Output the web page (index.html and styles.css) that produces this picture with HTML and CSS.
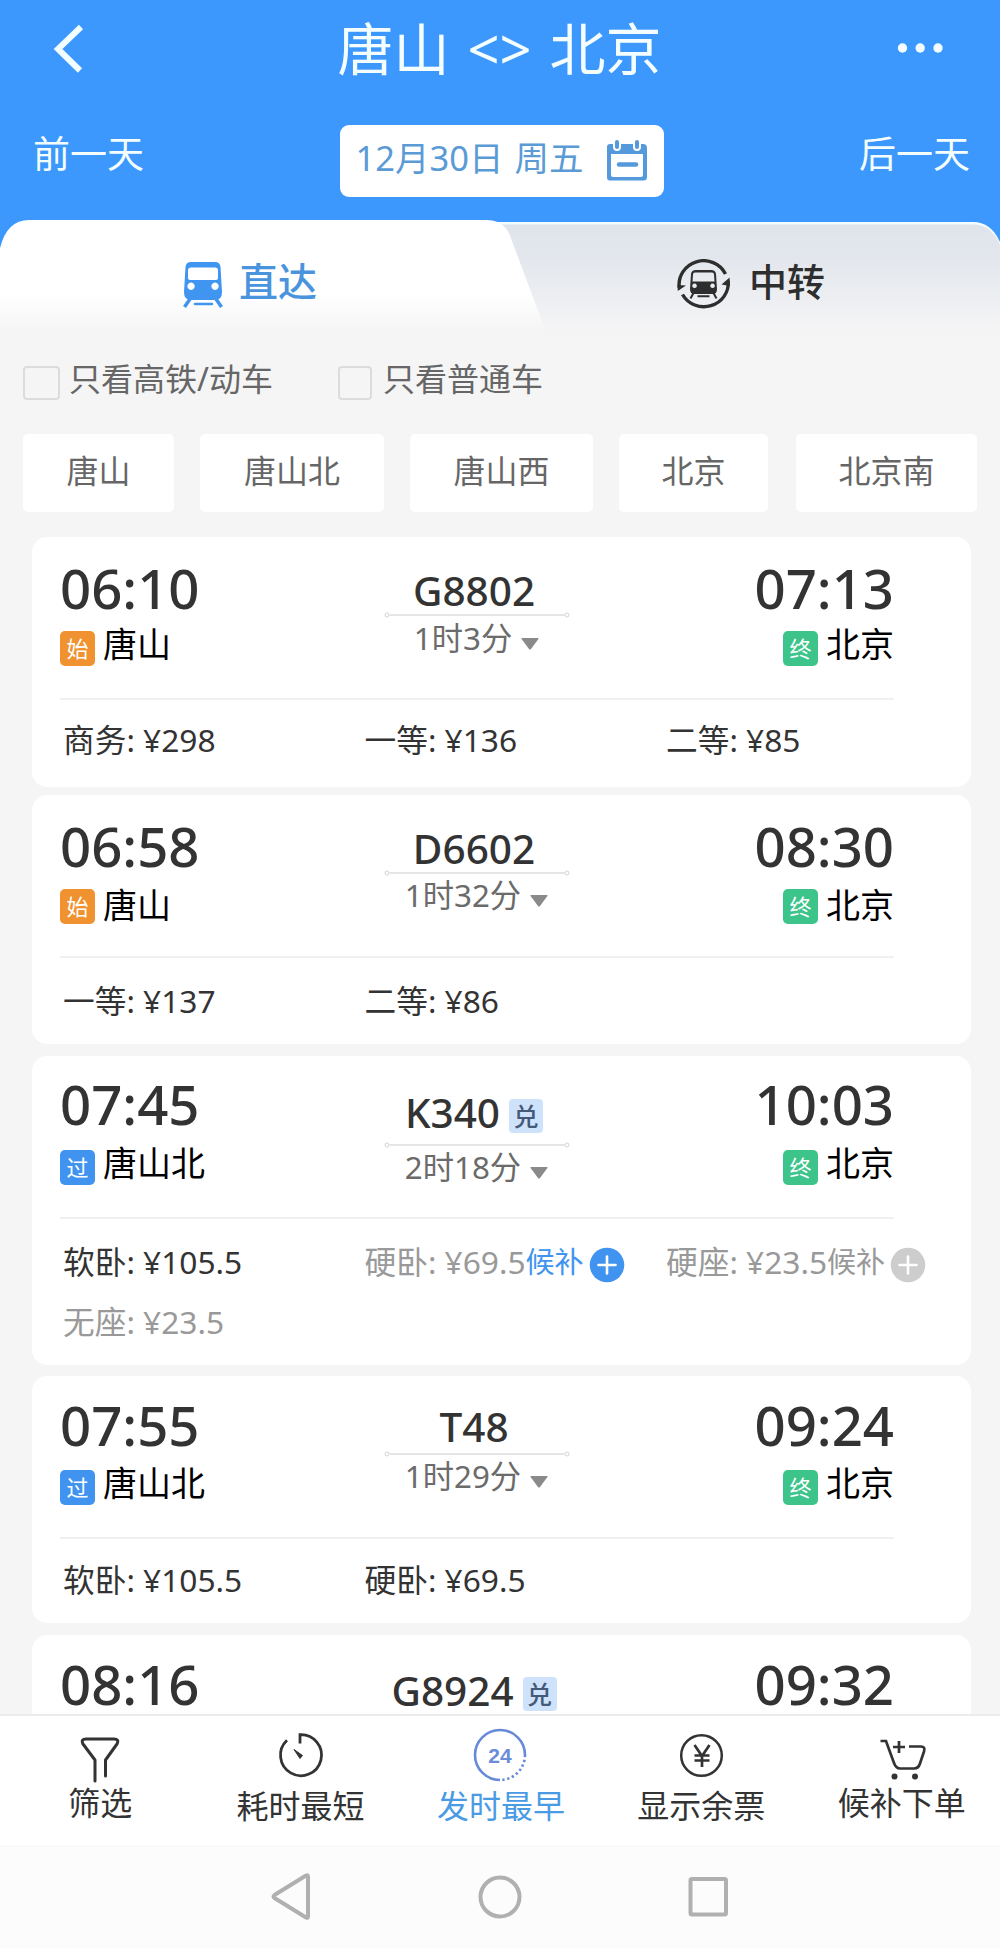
FILE: index.html
```html
<!DOCTYPE html>
<html lang="zh-CN">
<head>
<meta charset="utf-8">
<title>唐山 - 北京</title>
<link rel="stylesheet" href="styles.css">
</head>
<body>
<svg width="0" height="0" class="defs">
  <symbol id="plus" viewBox="0 0 36 36"><circle cx="18" cy="18" r="17.3" fill="currentColor"/><path d="M18 9.5v17M9.5 18h17" stroke="#fff" stroke-width="2.6" stroke-linecap="round"/></symbol>
  <symbol id="rule" viewBox="0 0 186 8"><path d="M5.500 4h175" stroke="#dcdcdc" stroke-width="1.600"/><circle cx="3" cy="4" r="2" fill="#fff" stroke="#d4d4d4"/><circle cx="183" cy="4" r="2" fill="#fff" stroke="#d4d4d4"/></symbol>
  <symbol id="caret" viewBox="0 0 20 14"><path d="M2 1h16q1 0 .4 1L11 12q-1 1-2 0L1.600 2q-.6-1 .4-1z" fill="#8a8a8a"/></symbol>
</svg>
<div class="app">
  <header class="header">
    <div class="titlebar">
      <svg class="back" width="36" height="50" viewBox="0 0 36 50"><path d="M33 4 10 26l22 21.500" fill="none" stroke="#f2feff" stroke-width="6"/></svg>
      <h1 class="title">唐山 &lt;&gt; 北京</h1>
      <svg class="more" width="50" height="12" viewBox="0 0 50 12"><g fill="#f4feff"><circle cx="7.500" cy="6" r="4.700"/><circle cx="25.200" cy="6" r="4.700"/><circle cx="43" cy="6" r="4.700"/></g></svg>
    </div>
    <div class="daybar">
      <span class="day">前一天</span>
      <div class="date"><span>12月30日 周五</span>
        <svg width="42" height="42" viewBox="0 0 42 42"><path fill="#5499dc" fill-rule="evenodd" d="M4 4h3v3a4 4 0 0 0 8 0V4h12v3a4 4 0 0 0 8 0V4h2q4 0 4 4v29q0 3.500-3.500 3.500h-34Q1 40.500 1 37V7q0-3 3-3zM5 14v21q0 2 2 2h28q2 0 2-2V14z"/><path d="M11 2v5M31 2v5" stroke="#5499dc" stroke-width="4" stroke-linecap="round"/><path d="M13 24.500h17" stroke="#5499dc" stroke-width="4.500" stroke-linecap="round"/></svg>
      </div>
      <span class="day">后一天</span>
    </div>
  </header>

  <nav class="tabs">
    <svg class="tabs-bg" width="1000" height="120" viewBox="0 0 1000 120">
      <defs>
        <linearGradient id="grey" x1="0" y1="0" x2="0" y2="1"><stop offset="0" stop-color="#dfe3eb"/><stop offset=".3" stop-color="#e3e7ed"/><stop offset=".9" stop-color="#f4f4f5"/><stop offset="1" stop-color="#f5f5f5"/></linearGradient>
        <linearGradient id="white" x1="0" y1="0" x2="0" y2="1"><stop offset="0" stop-color="#fff"/><stop offset=".62" stop-color="#fff"/><stop offset=".92" stop-color="#f5f5f5"/></linearGradient>
      </defs>
      <path d="M0 0h1000v40H0z" fill="#3c98fc"/>
      <path d="M470 2h503q18 0 27 20v98H470z" fill="#f2fdff"/>
      <path d="M470 4.500h503q18 0 27 20V120H470z" fill="url(#grey)"/>
      <path d="M0 120V28Q7 0 29 0h457q16 0 23 13l40 107z" fill="url(#white)"/>
    </svg>
    <div class="tab tab-active">
      <svg width="42" height="48" viewBox="0 0 42 48"><path fill="#3f95f0" fill-rule="evenodd" d="M9 1h24q5 0 5.500 5L40 31q0 8-7 8H9q-7 0-7-8L3.500 6Q4 1 9 1zM9 6.500q-3 0-3 3v7.500q0 2 2 2h26q2 0 2-2V9.500q0-3-3-3zM9 21.500a3.700 3.700 0 1 0 .1 0zM33 21.500a3.700 3.700 0 1 0 .1 0z"/><path d="M8 38 2.500 46M34 38l5.500 8" stroke="#3f95f0" stroke-width="3.500"/><path d="M13 43h17" stroke="#3f95f0" stroke-width="2.500" stroke-linecap="round"/></svg>
      <span>直达</span>
    </div>
    <div class="tab tab-transfer">
      <svg width="54" height="52" viewBox="0 0 54 52"><g fill="none" stroke="#2e2e2e" stroke-width="3.400"><path d="M2.300 29A24.500 24 0 0 1 48.500 15"/><path d="M51.300 22A24.500 24 0 0 1 5.500 35.500"/></g><path d="M.8 32l-.3-6 8.500.5zM52.600 18.500l.2 8.500-8.300-1.500z" fill="#2e2e2e"/><path fill="#2e2e2e" fill-rule="evenodd" d="M19 11h15q4.500 0 5 4l1 15q0 5-4 5H17q-4 0-4-5l1-15q.5-4 5-4zM18 13.500q-2 0-2 2l-.5 7h22l-.5-7q0-2-2-2zM17.500 24.500a2.300 2.300 0 1 0 .1 0zM35.500 24.500a2.300 2.300 0 1 0 .1 0z"/><path d="M16.500 34l-3 5.500M36.500 34l3 5.500M20.500 37.300h12" stroke="#2e2e2e" stroke-width="2"/></svg>
      <span>中转</span>
    </div>
  </nav>

  <section class="filters">
    <label class="check"><i class="box box-wide"></i>只看高铁/动车</label>
    <label class="check"><i class="box"></i>只看普通车</label>
  </section>
  <section class="chips">
    <span class="chip">唐山</span><span class="chip">唐山北</span><span class="chip">唐山西</span><span class="chip">北京</span><span class="chip">北京南</span>
  </section>

  <main class="list">
    <article class="train">
      <div class="route">
        <div class="stop"><div class="time">06:10</div><div class="station"><i class="tag start">始</i>唐山</div></div>
        <div class="mid"><div class="no">G8802</div><svg class="rule"><use href="#rule"/></svg><div class="dur">1时3分<svg class="caret"><use href="#caret"/></svg></div></div>
        <div class="stop to"><div class="time">07:13</div><div class="station"><i class="tag end">终</i>北京</div></div>
      </div>
      <div class="seats"><span>商务: ¥298</span><span>一等: ¥136</span><span>二等: ¥85</span></div>
    </article>

    <article class="train second">
      <div class="route">
        <div class="stop"><div class="time">06:58</div><div class="station"><i class="tag start">始</i>唐山</div></div>
        <div class="mid"><div class="no">D6602</div><svg class="rule"><use href="#rule"/></svg><div class="dur">1时32分<svg class="caret"><use href="#caret"/></svg></div></div>
        <div class="stop to"><div class="time">08:30</div><div class="station"><i class="tag end">终</i>北京</div></div>
      </div>
      <div class="seats"><span>一等: ¥137</span><span>二等: ¥86</span></div>
    </article>

    <article class="train tall">
      <div class="route">
        <div class="stop"><div class="time">07:45</div><div class="station"><i class="tag pass">过</i>唐山北</div></div>
        <div class="mid"><div class="no">K340<i class="redeem">兑</i></div><svg class="rule"><use href="#rule"/></svg><div class="dur">2时18分<svg class="caret"><use href="#caret"/></svg></div></div>
        <div class="stop to"><div class="time">10:03</div><div class="station"><i class="tag end">终</i>北京</div></div>
      </div>
      <div class="seats"><span>软卧: ¥105.5</span><span class="out">硬卧: ¥69.5<b class="wait">候补</b><svg class="plus wait"><use href="#plus"/></svg></span><span class="out">硬座: ¥23.5<b>候补</b><svg class="plus none"><use href="#plus"/></svg></span><span class="out">无座: ¥23.5</span></div>
    </article>

    <article class="train fourth">
      <div class="route">
        <div class="stop"><div class="time">07:55</div><div class="station"><i class="tag pass">过</i>唐山北</div></div>
        <div class="mid"><div class="no">T48</div><svg class="rule"><use href="#rule"/></svg><div class="dur">1时29分<svg class="caret"><use href="#caret"/></svg></div></div>
        <div class="stop to"><div class="time">09:24</div><div class="station"><i class="tag end">终</i>北京</div></div>
      </div>
      <div class="seats"><span>软卧: ¥105.5</span><span>硬卧: ¥69.5</span></div>
    </article>

    <article class="train last">
      <div class="route">
        <div class="stop"><div class="time">08:16</div></div>
        <div class="mid"><div class="no">G8924<i class="redeem">兑</i></div></div>
        <div class="stop to"><div class="time">09:32</div></div>
      </div>
    </article>
  </main>

  <nav class="toolbar">
    <div class="tool up">
      <svg width="60" height="60" viewBox="0 0 60 60"><path d="M25 55V34L13 18q-2.500-5 3-5h28q5.500 0 3 5L35.500 34v16" fill="none" stroke="#333" stroke-width="3" stroke-linecap="round" stroke-linejoin="round"/></svg>
      <span>筛选</span>
    </div>
    <div class="tool">
      <svg width="60" height="60" viewBox="0 0 60 60"><path d="M30 17.500V8.700a20.500 20.500 0 1 1-13 5.500" fill="none" stroke="#333" stroke-width="2.800"/><path d="M24 23.500l8.500 6-2.500 3z" fill="#333" stroke="#333" stroke-linejoin="round"/></svg>
      <span>耗时最短</span>
    </div>
    <div class="tool on">
      <svg width="60" height="60" viewBox="0 0 60 60"><g fill="none" stroke="#668ad8" stroke-width="2.600"><path d="M30 54A25 25 0 1 1 55 29"/><path d="M55 29A25 25 0 0 1 30 54" stroke-dasharray="2.300 2.600"/></g><text x="30" y="36.500" text-anchor="middle" class="num24">24</text></svg>
      <span>发时最早</span>
    </div>
    <div class="tool">
      <svg width="60" height="60" viewBox="0 0 60 60"><g fill="none" stroke="#333"><circle cx="30.500" cy="29.500" r="20.300" stroke-width="2.500"/><path d="M23.500 19l7.500 11 7.500-11M31 30v11M23.500 29.500h15M23.500 34.500h15" stroke-width="2.700"/></g></svg>
      <span>显示余票</span>
    </div>
    <div class="tool up">
      <svg width="60" height="60" viewBox="0 0 60 60"><path d="M9.500 15h5.500l8 22q2 5.500 6 5.500h14q4.500 0 6-5l4-12q1.500-5-3-5H38" fill="none" stroke="#333" stroke-width="2.700"/><path d="M28 15v12M22 21h12" stroke="#333" stroke-width="2.700"/><g fill="#333"><circle cx="23.500" cy="50.500" r="3"/><circle cx="44" cy="50.500" r="3"/></g></svg>
      <span>候补下单</span>
    </div>
  </nav>

  <footer class="sysnav">
    <svg width="44" height="48" viewBox="0 0 44 48"><path d="M38 3.500v40q0 2-2 1L4.500 25q-2-1.500 0-3L36 2.500q2-1 2 1z"/></svg>
    <svg width="44" height="48" viewBox="0 0 44 48"><circle cx="22" cy="24" r="19.500"/></svg>
    <svg width="44" height="48" viewBox="0 0 44 48"><rect x="4.500" y="6" width="35.500" height="35.500" rx="1.500"/></svg>
  </footer>
</div>
</body>
</html>
```
FILE: styles.css
```css
* { box-sizing: border-box; }
body { margin: 0; background: #f5f5f5; font-family: "Noto Sans", "Noto Sans CJK SC", sans-serif; color: #333; }
i { font-style: normal; }
b { font-weight: 400; }
svg { display: block; flex: none; }
.defs { position: absolute; }
.app { display: flex; flex-direction: column; width: 1000px; height: 1948px; overflow: hidden; }

.header { height: 220px; background: #3c98fc; color: #f4feff; }
.titlebar { display: flex; align-items: center; justify-content: space-between; height: 96px; padding: 0 55px 0 48px; }
.title { margin: 0; padding-left: 20px; font-size: 56px; font-weight: 400; line-height: 96px; white-space: nowrap; word-spacing: 3.5px; }
.daybar { display: flex; justify-content: space-between; padding: 29px 30px 0 33px; }
.day { font-size: 37px; line-height: 58px; }
.date { display: flex; align-items: center; justify-content: space-between; width: 324px; height: 72px; padding: 0 16px 0 16px; background: #fff; border-radius: 9px; color: #5a9bd6; font-size: 34.5px; line-height: 66px; white-space: nowrap; word-spacing: 2px; }
.date span { margin-top: -6px; }

.tabs { position: relative; display: flex; height: 120px; }
.tabs-bg { position: absolute; left: 0; top: 0; }
.tab { position: relative; display: flex; align-items: center; gap: 15px; width: 500px; height: 126px; font-size: 38px; font-weight: 500; color: #2e2e2e; }
.tab span { margin-top: -8px; }
.tab svg { margin-top: 4px; }
.tab-active { color: #4a94de; padding-left: 182px; font-size: 39px; }
.tab-transfer { gap: 18px; padding-left: 177px; }

.filters { display: flex; height: 94px; padding: 19px 0 0 23px; color: #666; font-size: 32px; line-height: 40px; }
.check { display: flex; width: 315px; }
.box { width: 34px; height: 34px; margin: 7px 11px 0 0; border: 2px solid #dcdcdc; border-radius: 4px; flex: none; }
.box-wide { width: 37px; margin-right: 9px; }
.chips { display: grid; grid-template-columns: 177px 210px 209px 177px 181px; height: 78px; margin: 0 23px; }
.chip { margin-right: 26px; background: #fff; border-radius: 5px; color: #666; font-size: 32px; line-height: 74px; text-align: center; }
.chip:nth-child(4) { margin-right: 28px; }
.chip:last-child { margin-right: 0; }

.list { height: 1202px; padding: 25px 29px 0 32px; overflow: hidden; }
.train { --time: 22px; --name: 0px; --tag: 12px; --no: 32px; --line: 2px; --dur: 3px; --seat: 15px; height: 250px; margin-bottom: 8px; padding: 0 0 0 28px; background: #fff; border-radius: 15px; }
.second { --name: 3px; --tag: 9px; --line: 2px; --dur: 2px; --seat: 18px; height: 249px; margin-bottom: 12px; }
.tall { --time: 19px; --name: 3px; --no: 35px; --line: 10px; --dur: 2px; --seat: 18px; height: 309px; margin-bottom: 11px; }
.fourth { --time: 20px; --name: 2px; --no: 29px; --line: 5px; --dur: 2px; --seat: 16px; height: 247px; margin-bottom: 12px; }
.last { --time: 20px; --no: 34px; margin: 0; }
.route { display: grid; grid-template-columns: 1fr 186px 1fr; width: 834px; height: 163px; border-bottom: 2px solid #f0f0f0; }
.stop { padding-top: var(--time); }
.time { height: 60px; font-size: 54.5px; font-weight: 500; line-height: 58px; }
.station { display: flex; align-items: flex-start; padding-top: var(--name); gap: 8px; font-size: 34px; line-height: 50px; color: #000; }
.to { display: flex; flex-direction: column; align-items: flex-end; }
.tag { width: 35px; height: 35px; margin-top: var(--tag); border-radius: 5px; color: #fff; font-size: 22px; line-height: 35px; text-align: center; }
.start { background: #f0922f; }
.end { background: #3cc48a; }
.pass { background: #4094f0; }
.mid { padding-top: var(--no); }
.no { display: flex; justify-content: center; align-items: center; gap: 9px; height: 44px; padding-right: 6px; font-size: 40.5px; font-weight: 500; line-height: 44px; }
.redeem { width: 34px; height: 34px; margin-top: 5px; border-radius: 4px; background: #cfe2fb; color: #445a78; font-size: 25px; line-height: 34px; text-align: center; }
.rule { width: 186px; height: 8px; margin: calc(var(--line) - 4px) 0 -4px; }
.dur { display: flex; justify-content: center; align-items: center; gap: 8px; height: 40px; margin-top: var(--dur); color: #6b6b6b; font-size: 31.3px; line-height: 40px; white-space: nowrap; }
.caret { width: 20px; height: 14px; margin-top: 11px; }
.seats { display: grid; grid-template-columns: 301.500px 301.500px 290px; grid-auto-rows: 60px; padding: calc(var(--seat) - 5px) 0 0 3px; font-size: 31.7px; line-height: 60px; white-space: nowrap; }
.seats span { display: flex; align-items: center; }
.out, .none { color: #999; }
.out b { font-size: 29px; }
.plus { width: 36px; height: 36px; margin: 5px 0 0 5px; }
.seats .wait { color: #4094f0; }
.seats .none { color: #cdcdcd; }

.toolbar { display: grid; grid-template-columns: repeat(5, 200.400px); height: 132px; border-top: 2px solid #ebebeb; background: #fff; font-size: 32px; flex: none; }
.tool { display: flex; flex-direction: column; align-items: center; padding-top: 10px; }
.tool svg { margin-right: 1px; }
.tool span { margin-top: 0; line-height: 40px; }
.up span { margin-top: -3px; }
.on { color: #4a9be4; }
.num24 { font: 700 21px "Liberation Sans", sans-serif; fill: #6a8cda; }
.sysnav { display: flex; justify-content: center; gap: 164px; flex: 1; padding-top: 26px; background: #fcfcfc; border-top: 1px solid #f7f7f7; }
.sysnav svg { fill: none; stroke: #b0b0b0; stroke-width: 4; }
```
